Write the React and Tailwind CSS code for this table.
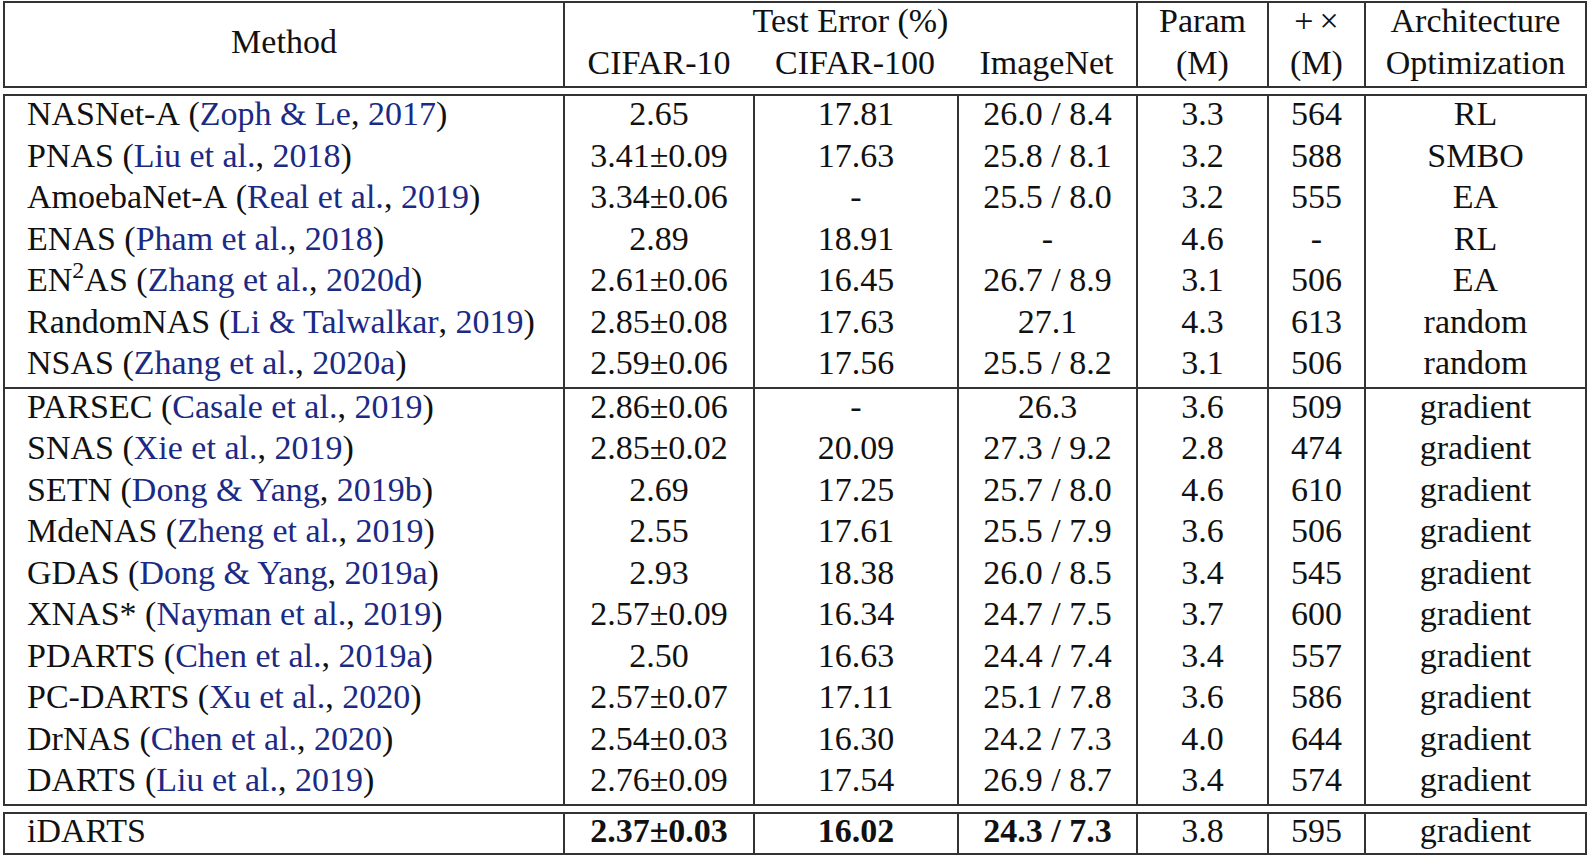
const GROUP_A = [
  ["NASNet-A", "Zoph & Le", "2017", "2.65", "17.81", "26.0 / 8.4", "3.3", "564", "RL"],
  ["PNAS", "Liu et al.", "2018", "3.41±0.09", "17.63", "25.8 / 8.1", "3.2", "588", "SMBO"],
  ["AmoebaNet-A", "Real et al.", "2019", "3.34±0.06", "-", "25.5 / 8.0", "3.2", "555", "EA"],
  ["ENAS", "Pham et al.", "2018", "2.89", "18.91", "-", "4.6", "-", "RL"],
  ["EN2AS", "Zhang et al.", "2020d", "2.61±0.06", "16.45", "26.7 / 8.9", "3.1", "506", "EA"],
  ["RandomNAS", "Li & Talwalkar", "2019", "2.85±0.08", "17.63", "27.1", "4.3", "613", "random"],
  ["NSAS", "Zhang et al.", "2020a", "2.59±0.06", "17.56", "25.5 / 8.2", "3.1", "506", "random"],
];

const GROUP_B = [
  ["PARSEC", "Casale et al.", "2019", "2.86±0.06", "-", "26.3", "3.6", "509", "gradient"],
  ["SNAS", "Xie et al.", "2019", "2.85±0.02", "20.09", "27.3 / 9.2", "2.8", "474", "gradient"],
  ["SETN", "Dong & Yang", "2019b", "2.69", "17.25", "25.7 / 8.0", "4.6", "610", "gradient"],
  ["MdeNAS", "Zheng et al.", "2019", "2.55", "17.61", "25.5 / 7.9", "3.6", "506", "gradient"],
  ["GDAS", "Dong & Yang", "2019a", "2.93", "18.38", "26.0 / 8.5", "3.4", "545", "gradient"],
  ["XNAS*", "Nayman et al.", "2019", "2.57±0.09", "16.34", "24.7 / 7.5", "3.7", "600", "gradient"],
  ["PDARTS", "Chen et al.", "2019a", "2.50", "16.63", "24.4 / 7.4", "3.4", "557", "gradient"],
  ["PC-DARTS", "Xu et al.", "2020", "2.57±0.07", "17.11", "25.1 / 7.8", "3.6", "586", "gradient"],
  ["DrNAS", "Chen et al.", "2020", "2.54±0.03", "16.30", "24.2 / 7.3", "4.0", "644", "gradient"],
  ["DARTS", "Liu et al.", "2019", "2.76±0.09", "17.54", "26.9 / 8.7", "3.4", "574", "gradient"],
];

const COLS = "grid grid-cols-[558px_190px_204px_179px_131px_97px_221px]";
const cell = "flex items-center justify-center pb-[5px] border-l-2 border-[#333]";

function MethodName({ name }) {
  if (name === "EN2AS") {
    return (
      <span>
        EN<sup className="text-[24px] -top-[13px]">2</sup>AS
      </span>
    );
  }
  return <span>{name}</span>;
}

function Row({ r, height = "h-[41.5px]" }) {
  const [name, author, year, ...vals] = r;
  return (
    <div className={`${COLS} ${height}`}>
      <div className="flex items-center pb-[5px] pl-[22px] whitespace-nowrap">
        <MethodName name={name} />
        <span>&nbsp;(</span>
        <span className="text-[#1b2a84]">{author}</span>
        <span>,&nbsp;</span>
        <span className="text-[#1b2a84]">{year}</span>
        <span>)</span>
      </div>
      {vals.map((v, i) => (
        <div key={i} className={cell}>
          {v}
        </div>
      ))}
    </div>
  );
}

export default function App() {
  return (
    <div className="w-[1592px] h-[856px] bg-white pt-[1px] pl-[3px] text-[34px] leading-none text-[#111] font-['Liberation_Serif','Times_New_Roman',serif] overflow-hidden">
      <div className="w-[1584px] flex flex-col gap-[6px]">
        {/* Header */}
        <div className={`${COLS} grid-rows-[41.5px_41.5px] border-2 border-[#333]`}>
          <div className="row-span-2 flex items-center justify-center pb-[6px]">Method</div>
          <div className="col-span-3 flex items-center justify-center pb-[6px] border-l-2 border-[#333]">
            Test Error (%)
          </div>
          <div className={cell}>Param</div>
          <div className={`${cell} gap-[6px] font-light`}>
            <span>+</span>
            <span>×</span>
          </div>
          <div className={cell}>Architecture</div>
          <div className="flex items-center justify-center pb-[5px] border-l-2 border-[#333]">CIFAR-10</div>
          <div className="flex items-center justify-center pb-[5px]">CIFAR-100</div>
          <div className="flex items-center justify-center pb-[5px]">ImageNet</div>
          <div className={cell}>(M)</div>
          <div className={cell}>(M)</div>
          <div className={cell}>Optimization</div>
        </div>

        {/* Baselines */}
        <div className="border-2 border-[#333] flex flex-col">
          {GROUP_A.map((r) => (
            <Row key={r[0]} r={r} />
          ))}
          <div className="h-[2px] bg-[#333]" />
          {GROUP_B.map((r) => (
            <Row key={r[0]} r={r} />
          ))}
        </div>

        {/* Ours */}
        <div className={`${COLS} h-[43px] border-2 border-[#333]`}>
          <div className="flex items-center pb-[5px] pl-[22px]">iDARTS</div>
          <div className={`${cell} font-bold`}>2.37±0.03</div>
          <div className={`${cell} font-bold`}>16.02</div>
          <div className={`${cell} font-bold`}>24.3 / 7.3</div>
          <div className={cell}>3.8</div>
          <div className={cell}>595</div>
          <div className={cell}>gradient</div>
        </div>
      </div>
    </div>
  );
}
